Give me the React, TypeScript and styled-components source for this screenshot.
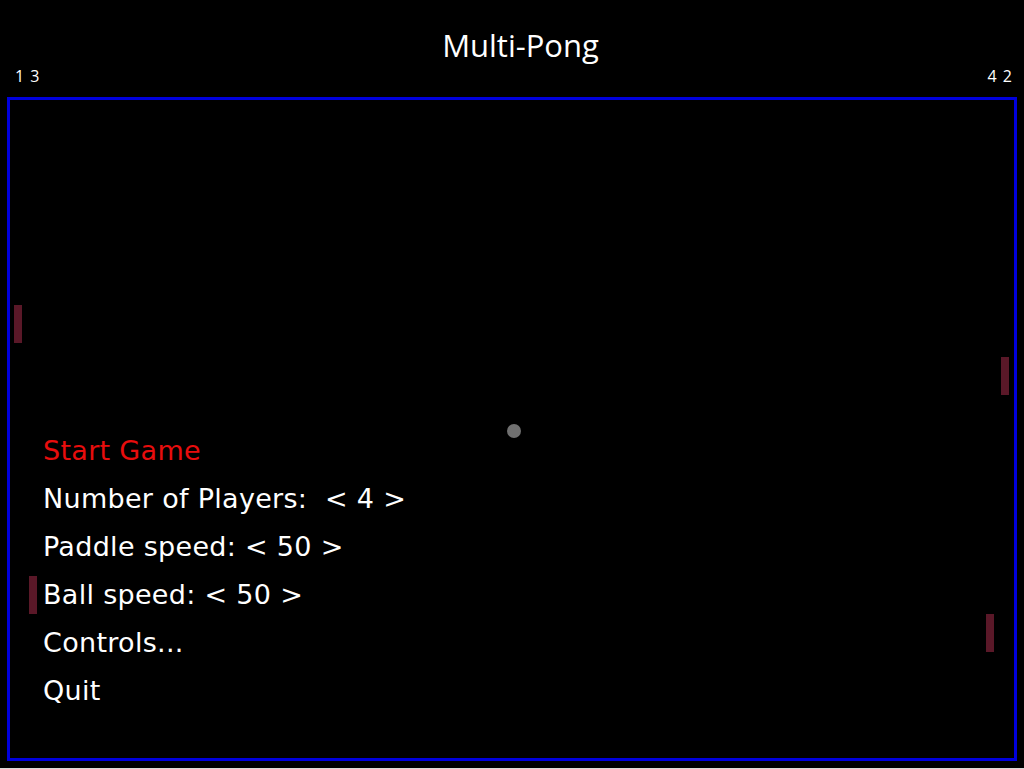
import styled, { createGlobalStyle } from "styled-components";

const GlobalStyle = createGlobalStyle`
  html, body {
    margin: 0;
    padding: 0;
    background: #d9d9d9;
  }
`;

const Stage = styled.div`
  width: 1024px;
  height: 768px;
  background: #000;
  color: #fff;
  font-family: "Open Sans", "DejaVu Sans", sans-serif;
  padding-top: 30px;
  box-sizing: border-box;
  display: flex;
  flex-direction: column;
`;

const Title = styled.h1`
  margin: 0;
  font-size: 31px;
  line-height: 31px;
  font-weight: 400;
  text-align: center;
  padding-left: 17px;
`;

const Scores = styled.div`
  display: flex;
  justify-content: space-between;
  margin-top: 7px;
  padding: 0 11px 0 15px;
  font-size: 16px;
  line-height: 16px;
  letter-spacing: 1px;
`;

const Field = styled.div`
  position: relative;
  margin: 13px 0 0 7px;
  width: 1010px;
  height: 664px;
  box-sizing: border-box;
  border: 3px solid #0000dd;
  padding: 327px 0 0 33px;
`;

const Menu = styled.ul`
  list-style: none;
  margin: 0;
  padding: 0;
`;

const MenuItem = styled.li<{ $active?: boolean }>`
  font-family: "DejaVu Sans", "Open Sans", sans-serif;
  font-size: 27px;
  line-height: 48px;
  letter-spacing: 0.3px;
  white-space: pre;
  color: ${(p) => (p.$active ? "#e80d0d" : "#fff")};
`;

const Paddle = styled.div`
  position: absolute;
  width: 8px;
  height: 38px;
  background: #5a1828;
`;

const Ball = styled.div`
  position: absolute;
  width: 14px;
  height: 14px;
  border-radius: 50%;
  background: #707070;
`;

const paddles = [
  { x: 4, y: 205 },
  { x: 991, y: 257 },
  { x: 19, y: 476 },
  { x: 976, y: 514 },
];

const items = [
  "Start Game",
  "Number of Players:  < 4 >",
  "Paddle speed: < 50 >",
  "Ball speed: < 50 >",
  "Controls...",
  "Quit",
];

export default function App() {
  return (
    <>
      <GlobalStyle />
      <Stage>
        <Title>Multi-Pong</Title>
        <Scores>
          <span>1 3</span>
          <span>4 2</span>
        </Scores>
        <Field>
          {paddles.map((p, i) => (
            <Paddle key={i} style={{ left: p.x, top: p.y }} />
          ))}
          <Ball style={{ left: 497, top: 324 }} />
          <Menu>
            {items.map((t, i) => (
              <MenuItem key={t} $active={i === 0}>
                {t}
              </MenuItem>
            ))}
          </Menu>
        </Field>
      </Stage>
    </>
  );
}
